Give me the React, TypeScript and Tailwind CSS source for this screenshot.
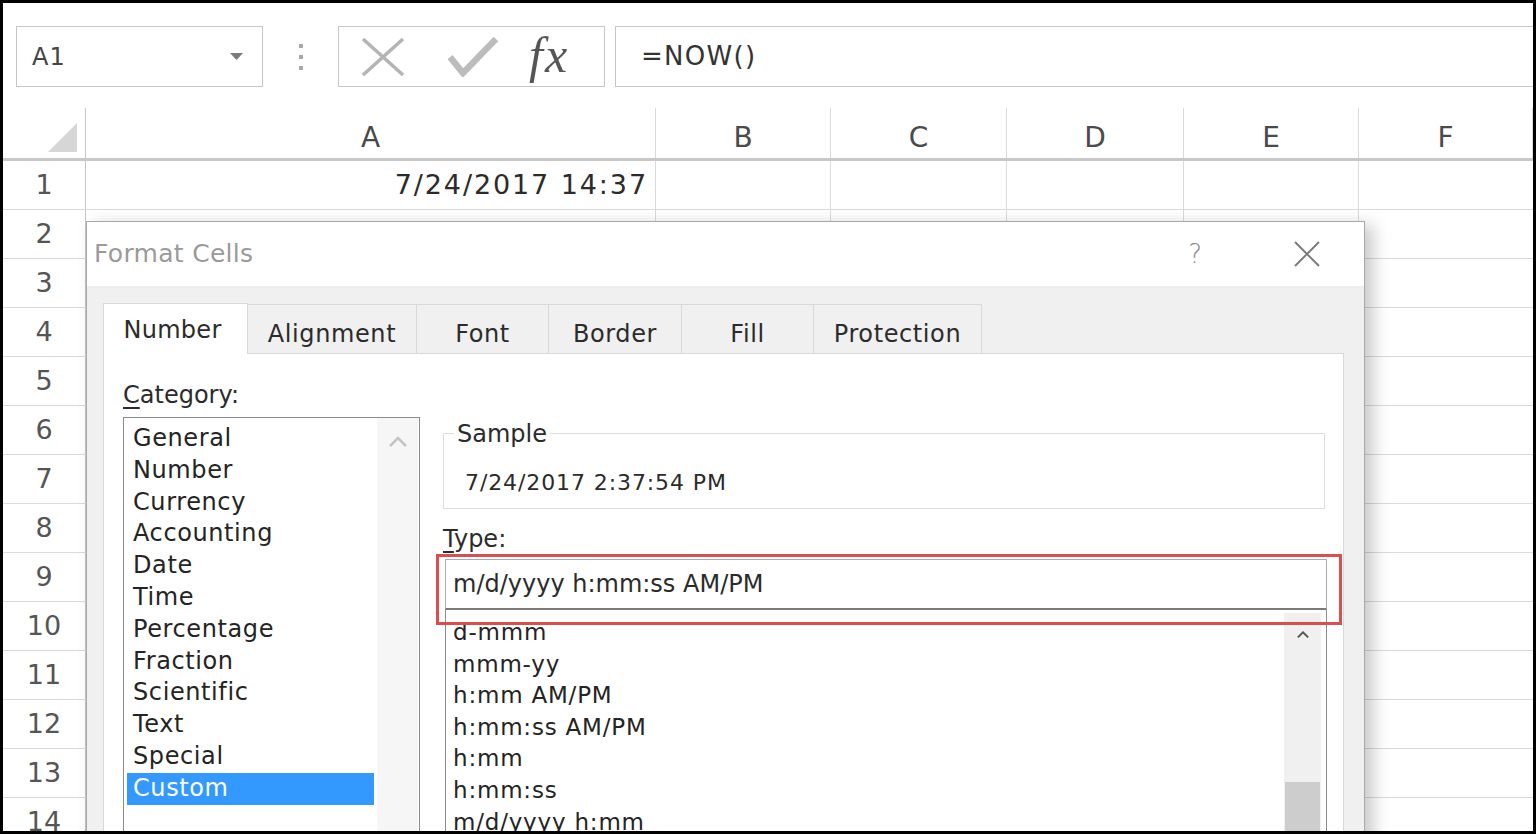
import React from "react";

const cats = [
  "General",
  "Number",
  "Currency",
  "Accounting",
  "Date",
  "Time",
  "Percentage",
  "Fraction",
  "Scientific",
  "Text",
  "Special",
  "Custom",
];

const types = [
  "d-mmm",
  "mmm-yy",
  "h:mm AM/PM",
  "h:mm:ss AM/PM",
  "h:mm",
  "h:mm:ss",
  "m/d/yyyy h:mm",
  "mm:ss",
];

const cols = ["A", "B", "C", "D", "E", "F"];
const rowNums = [1, 2, 3, 4, 5, 6, 7, 8, 9, 10, 11, 12, 13, 14];

const tabs = [
  { label: "Alignment", w: "w-[169px]" },
  { label: "Font", w: "w-[132px]" },
  { label: "Border", w: "w-[133px]" },
  { label: "Fill", w: "w-[132px]" },
  { label: "Protection", w: "w-[168px]" },
];

export default function App() {
  return (
    <div className="relative h-[834px] w-[1536px] overflow-hidden border-[3px] border-black bg-white font-['DejaVu_Sans',sans-serif] text-[#333]">
      {/* Formula bar */}
      <div className="mt-[23px] flex h-[61px]">
        <div className="ml-[13px] flex w-[247px] items-center justify-between border border-[#c6c6c6] pl-[15px] pr-[19px]">
          <span className="text-[24px] tracking-[1px] text-[#444]">A1</span>
          <svg width="13" height="7" viewBox="0 0 13 7">
            <path d="M0 0h13L6.5 7z" fill="#7a7a7a" />
          </svg>
        </div>
        <div className="flex w-[75px] flex-col items-center justify-center gap-[7px]">
          <div className="h-[4px] w-[4px] bg-[#a8a8a8]" />
          <div className="h-[4px] w-[4px] bg-[#a8a8a8]" />
          <div className="h-[4px] w-[4px] bg-[#a8a8a8]" />
        </div>
        <div className="flex w-[267px] items-center border border-[#c6c6c6]">
          <svg className="ml-[22px]" width="44" height="40" viewBox="0 0 44 40">
            <path d="M2 2L42 38M42 2L2 38" stroke="#b4b4b4" strokeWidth="3.5" fill="none" />
          </svg>
          <svg className="ml-[43px]" width="50" height="40" viewBox="0 0 50 40">
            <path d="M2 20L15 36L48 2" stroke="#bcbcbc" strokeWidth="6.5" fill="none" strokeLinejoin="miter" />
          </svg>
          <span className="ml-[31px] -mt-[4px] font-['Liberation_Serif',serif] text-[50px] italic leading-none tracking-[2px] text-[#555]">
            fx
          </span>
        </div>
        <div className="ml-[10px] flex flex-1 items-center border-y border-l border-[#c6c6c6] pl-[25px] text-[26px] tracking-[1.3px] text-[#333]">
          =NOW()
        </div>
      </div>

      {/* Column header */}
      <div className="mt-[21px] grid h-[53px] grid-cols-[83px_570px_175px_176px_177px_175px_1fr] border-b-[3px] border-[#c8c8c8]">
        <div className="flex items-end justify-end border-r border-[#c6c6c6] pb-[6px] pr-[8px]">
          <svg width="29" height="29" viewBox="0 0 29 29">
            <path d="M29 0V29H0z" fill="#d6d6d6" />
          </svg>
        </div>
        {cols.map((c) => (
          <div
            key={c}
            className="flex items-end justify-center border-r border-[#dadada] pb-[4px] text-[28px] leading-[32px] text-[#4a4a4a]"
          >
            {c}
          </div>
        ))}
      </div>

      {/* Rows */}
      {rowNums.map((n) => (
        <div
          key={n}
          className="grid h-[49px] grid-cols-[83px_570px_175px_176px_177px_175px_1fr] border-b border-[#dadada]"
        >
          <div className="flex items-center justify-center border-r border-[#c6c6c6] text-[27px] text-[#555]">
            {n}
          </div>
          <div className="flex items-center justify-end border-r border-[#dadada] pr-[7px] text-[27px] tracking-[1.9px] text-[#2b2b2b]">
            {n === 1 ? "7/24/2017 14:37" : ""}
          </div>
          <div className="border-r border-[#dadada]" />
          <div className="border-r border-[#dadada]" />
          <div className="border-r border-[#dadada]" />
          <div className="border-r border-[#dadada]" />
          <div />
        </div>
      ))}

      {/* Format Cells dialog */}
      <div className="absolute left-[83px] top-[218px] flex h-[640px] w-[1279px] flex-col border border-[#a8a8a8] bg-[#f0f0f0] shadow-[8px_4px_16px_rgba(0,0,0,0.22)]">
        <div className="flex h-[64px] shrink-0 items-center bg-white pl-[7px] pr-[44px]">
          <span className="text-[25px] tracking-[0.3px] text-[#9a9a9a]">Format Cells</span>
          <span className="ml-auto text-[26px] font-light text-[#8a8a8a]">?</span>
          <svg className="ml-[92px]" width="26" height="26" viewBox="0 0 26 26">
            <path d="M1 1L25 25M25 1L1 25" stroke="#7c7c7c" strokeWidth="2" fill="none" />
          </svg>
        </div>

        <div className="flex flex-1 flex-col pl-[16px] pt-[18px]">
          {/* Tabs */}
          <div className="relative z-10 flex h-[49px] items-end">
            <div className="-mb-px flex h-[51px] w-[145px] items-center justify-center border-x border-t border-[#d9d9d9] bg-white pr-[6px] pt-[2px] text-[24px] tracking-[0.3px] text-[#2b2b2b]">
              Number
            </div>
            {tabs.map((t) => (
              <div
                key={t.label}
                className={`flex h-[49px] ${t.w} items-center justify-center border-r border-t border-[#d9d9d9] bg-[#f0f0f0] pt-[10px] text-[24px] tracking-[0.6px] text-[#2b2b2b]`}
              >
                {t.label}
              </div>
            ))}
          </div>

          {/* Panel */}
          <div className="flex w-[1241px] flex-1 border border-[#d9d9d9] bg-white pl-[19px]">
            {/* Category column */}
            <div className="flex w-[297px] flex-col pt-[25px]">
              <div className="h-[32px] text-[24px] leading-[32px] text-[#2b2b2b]">
                <span className="underline underline-offset-[4px]">C</span>ategory:
              </div>
              <div className="mt-[6px] flex h-[500px] border border-[#8c8c8c]">
                <div className="ml-[3px] w-[247px] pt-[5px]">
                  {cats.map((c) => (
                    <div
                      key={c}
                      className={`h-[31.8px] pl-[6px] text-[24px] leading-[31.8px] tracking-[0.6px] ${
                        c === "Custom" ? "bg-[#3399ff] text-white" : "text-[#242424]"
                      }`}
                    >
                      {c}
                    </div>
                  ))}
                </div>
                <div className="ml-[3px] flex w-[41px] justify-center bg-[#f6f6f6] pt-[18px]">
                  <svg width="20" height="12" viewBox="0 0 20 12">
                    <path d="M2 10L10 2L18 10" stroke="#c4c4c4" strokeWidth="2.5" fill="none" />
                  </svg>
                </div>
              </div>
            </div>

            {/* Right column */}
            <div className="ml-[23px] flex w-[884px] flex-col pt-[79px]">
              <div className="relative h-[76px] w-[882px] border border-[#dcdcdc] pl-[21px] pt-[33px]">
                <span className="absolute -top-[16px] left-[10px] bg-white px-[3px] text-[24px] leading-[32px] text-[#2b2b2b]">
                  Sample
                </span>
                <div className="text-[22px] leading-[32px] tracking-[0.9px] text-[#2b2b2b]">
                  7/24/2017 2:37:54 PM
                </div>
              </div>

              <div className="mt-[14px] h-[32px] text-[24px] leading-[32px] text-[#2b2b2b]">
                <span className="underline underline-offset-[4px]">T</span>ype:
              </div>

              <div className="relative mt-[4px]">
                <div className="ml-[2px] flex h-[51px] w-[882px] items-center border border-b-2 border-[#acacac] border-b-[#7a7a7a] pl-[7px] text-[24px] text-[#2b2b2b]">
                  m/d/yyyy h:mm:ss AM/PM
                </div>
                <div className="ml-[2px] flex h-[300px] w-[882px] overflow-hidden border-x border-[#8c8c8c]">
                  <div className="flex-1 pl-[7px] pt-[7px]">
                    {types.map((t) => (
                      <div
                        key={t}
                        className="h-[31.6px] text-[23px] leading-[31.6px] tracking-[0.8px] text-[#242424]"
                      >
                        {t}
                      </div>
                    ))}
                  </div>
                  <div className="mr-[5px] mt-[3px] flex w-[37px] flex-col items-center bg-[#f0f0f0]">
                    <svg className="mt-[18px]" width="20" height="12" viewBox="0 0 20 12">
                      <path d="M2 10L10 2L18 10" stroke="#555" strokeWidth="3" fill="none" />
                    </svg>
                    <div className="mt-[143px] h-[200px] w-[35px] bg-[#cdcdcd]" />
                  </div>
                </div>
                <div className="pointer-events-none absolute -left-[7px] -top-[5px] h-[71px] w-[906px] border-[3px] border-[#dc4d4d]" />
              </div>
            </div>
          </div>
        </div>
      </div>
    </div>
  );
}
